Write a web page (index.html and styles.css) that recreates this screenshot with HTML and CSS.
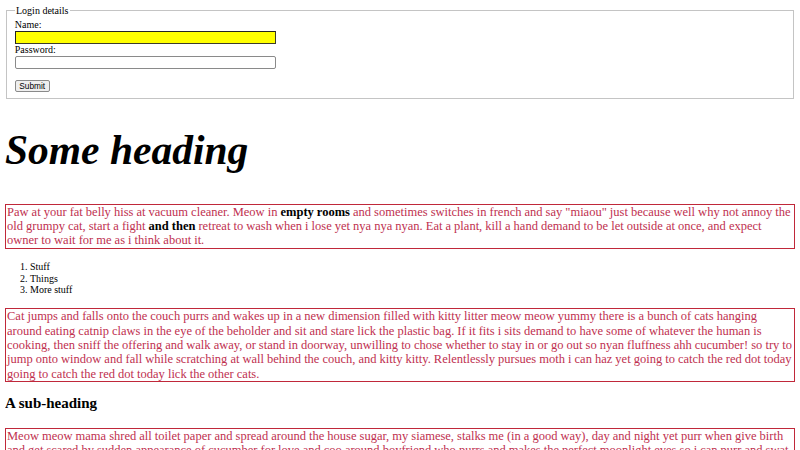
FILE: index.html
```html
<!DOCTYPE html>
<html lang="en">
<head>
<meta charset="utf-8">
<title>Styling example</title>
<link rel="stylesheet" href="styles.css">
</head>
<body>
<form class="login">
  <fieldset class="login-box">
    <legend class="login-legend">Login details</legend>
    <label class="field-label" for="name">Name:</label>
    <input class="field field-name" type="text" id="name">
    <label class="field-label" for="pwd">Password:</label>
    <input class="field field-pwd" type="password" id="pwd">
    <div class="submit-row"><button class="submit" type="button">Submit</button></div>
  </fieldset>
</form>

<h1 class="title">Some heading</h1>

<p class="boxed">Paw at your fat belly hiss at vacuum cleaner. Meow in <strong class="strong">empty rooms</strong> and sometimes switches in french and say "miaou" just because well why not annoy the old grumpy cat, start a fight <strong class="strong">and then</strong> retreat to wash when i lose yet nya nya nyan. Eat a plant, kill a hand demand to be let outside at once, and expect owner to wait for me as i think about it.</p>

<ol class="list">
  <li>Stuff</li>
  <li>Things</li>
  <li>More stuff</li>
</ol>

<p class="boxed">Cat jumps and falls onto the couch purrs and wakes up in a new dimension filled with kitty litter meow meow yummy there is a bunch of cats hanging around eating catnip claws in the eye of the beholder and sit and stare lick the plastic bag. If it fits i sits demand to have some of whatever the human is cooking, then sniff the offering and walk away, or stand in doorway, unwilling to chose whether to stay in or go out so nyan fluffness ahh cucumber! so try to jump onto window and fall while scratching at wall behind the couch, and kitty kitty. Relentlessly pursues moth i can haz yet going to catch the red dot today going to catch the red dot today lick the other cats.</p>

<h2 class="subtitle">A sub-heading</h2>

<p class="boxed">Meow meow mama shred all toilet paper and spread around the house sugar, my siamese, stalks me (in a good way), day and night yet purr when give birth and get scared by sudden appearance of cucumber for love and coo around boyfriend who purrs and makes the perfect moonlight eyes so i can purr and swat the fish from the table, then lie in the sun and stretch out, sleep on keyboard and walk on the keyboard.</p>
</body>
</html>
```
FILE: styles.css
```css
html {
  background: #fff;
}
body {
  margin: 5px;
  font-family: "Liberation Serif", "Times New Roman", serif;
  font-size: 10px;
  line-height: 11.5px;
  color: #000;
}
.login {
  margin: 0;
}
.login-box {
  margin: 0 1.25px;
  padding: 2.5px 7.5px 6px;
  border: 1px solid #c4c4c4;
  min-width: 0;
}
.login-legend {
  padding: 0 1.25px;
  font-size: 10px;
  line-height: 11.5px;
}
.field-label {
  display: block;
  height: 11.5px;
}
.field {
  display: block;
  box-sizing: border-box;
  width: 261px;
  height: 13.5px;
  margin: 0;
  padding: 0 2px;
  font-size: 8px;
  outline: none;
}
.field-name {
  background: #ffff00;
  border: 1px solid #3c3c2a;
  border-top-color: #222;
  border-left-color: #222;
  border-radius: 0;
}
.field-pwd {
  background: #fff;
  border: 1px solid #8a8a8a;
  border-radius: 2px;
}
.submit-row {
  margin-top: 11px;
  height: 12px;
}
.submit {
  box-sizing: border-box;
  height: 12px;
  width: 35px;
  padding: 0;
  margin: 0;
  font-family: "Liberation Sans", Arial, sans-serif;
  font-size: 8.3px;
  line-height: 10px;
  color: #000;
  background: #efefef;
  border: 1px solid #8a8a8a;
  border-radius: 2px;
}
.title {
  margin: 27.5px 0 29.5px;
  font-size: 41.5px;
  line-height: 47.7px;
  font-style: italic;
  font-weight: bold;
}
.boxed {
  margin: 12.5px 0;
  padding: 0 1px;
  border: 1px solid #c0283a;
  color: #c0304f;
  font-size: 12.5px;
  line-height: 14.375px;
  word-spacing: -0.07px;
}
.strong {
  color: #000;
  font-weight: bold;
}
.list {
  margin: 12.5px 0;
  padding-left: 25px;
}
.subtitle {
  margin: 11px 0 16px;
  font-size: 15px;
  line-height: 17.25px;
  font-weight: bold;
}
```
